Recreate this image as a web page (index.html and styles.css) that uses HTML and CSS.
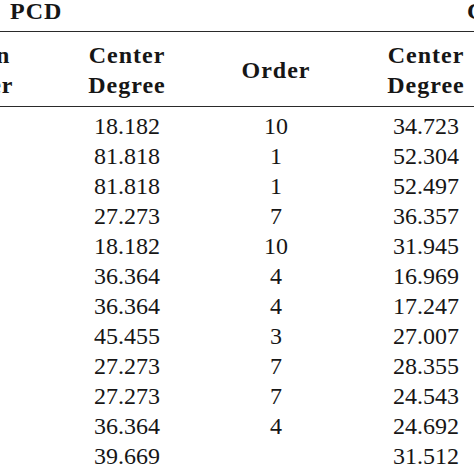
FILE: index.html
```html
<!DOCTYPE html>
<html>
<head>
<meta charset="utf-8">
<link rel="stylesheet" href="styles.css">
</head>
<body>
<div class="viewport">
  <table class="results">
    <colgroup>
      <col class="c0"><col class="c1"><col class="c2"><col class="c3"><col class="c4">
    </colgroup>
    <thead>
      <tr class="group-row">
        <th colspan="2" class="group first">PCD</th>
        <th colspan="3" class="group second">CCD</th>
      </tr>
      <tr class="head-row">
        <th>Mean<br>Order</th>
        <th>Center<br>Degree</th>
        <th>Order</th>
        <th>Center<br>Degree</th>
        <th>Order</th>
      </tr>
    </thead>
    <tbody>
      <tr class="first-row"><td>10</td><td>18.182</td><td>10</td><td>34.723</td><td>9</td></tr>
      <tr><td>1</td><td>81.818</td><td>1</td><td>52.304</td><td>2</td></tr>
      <tr><td>1</td><td>81.818</td><td>1</td><td>52.497</td><td>1</td></tr>
      <tr><td>7</td><td>27.273</td><td>7</td><td>36.357</td><td>6</td></tr>
      <tr><td>10</td><td>18.182</td><td>10</td><td>31.945</td><td>7</td></tr>
      <tr><td>4</td><td>36.364</td><td>4</td><td>16.969</td><td>11</td></tr>
      <tr><td>4</td><td>36.364</td><td>4</td><td>17.247</td><td>10</td></tr>
      <tr><td>3</td><td>45.455</td><td>3</td><td>27.007</td><td>8</td></tr>
      <tr><td>7</td><td>27.273</td><td>7</td><td>28.355</td><td>5</td></tr>
      <tr><td>7</td><td>27.273</td><td>7</td><td>24.543</td><td>4</td></tr>
      <tr><td>4</td><td>36.364</td><td>4</td><td>24.692</td><td>3</td></tr>
      <tr><td></td><td>39.669</td><td></td><td>31.512</td><td></td></tr>
    </tbody>
  </table>
</div>
</body>
</html>
```

FILE: styles.css
```css
html, body {
  margin: 0;
  padding: 0;
  background: #ffffff;
  overflow: hidden;
}

.viewport {
  width: 474px;
  height: 474px;
  overflow: hidden;
}

.results {
  border-collapse: separate;
  border-spacing: 0;
  table-layout: fixed;
  width: 746px;
  margin-left: -95px;
  margin-top: -4px;
  font-family: "Liberation Serif", "Times New Roman", serif;
  font-size: 24px;
  line-height: 30px;
  color: #161616;
}

.c0 { width: 148px; }
.c1 { width: 148px; }
.c2 { width: 150px; }
.c3 { width: 150px; }
.c4 { width: 150px; }

.results th,
.results td {
  padding: 0;
  text-align: center;
  vertical-align: middle;
  white-space: nowrap;
}

.results th {
  font-weight: bold;
  letter-spacing: 1px;
}

.group-row th {
  padding-bottom: 5px;
  border-bottom: 1px solid #2a2a2a;
  text-align: left;
}

.group.first {
  padding-left: 105px;
}

.group.second {
  padding-left: 266px;
}

.head-row th {
  padding-top: 8px;
  padding-bottom: 6px;
  border-bottom: 1px solid #2a2a2a;
}

.first-row td {
  padding-top: 4px;
}
```
